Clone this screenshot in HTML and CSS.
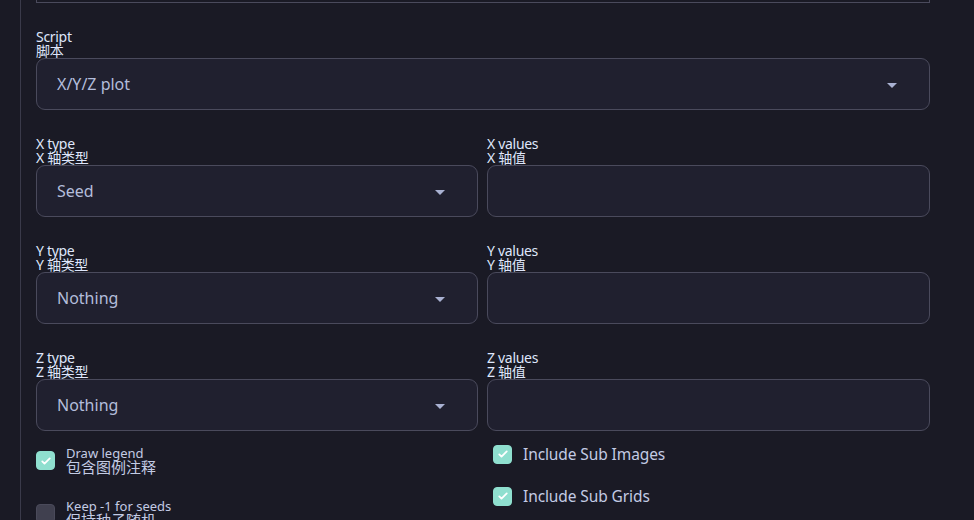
FILE: index.html
```html
<!DOCTYPE html>
<html lang="en">
<head>
    <meta charset="UTF-8">
    <title>X/Y/Z plot</title>
    <link rel="stylesheet" href="styles.css">
</head>
<body>
    <div class="panel">
        <div class="prev-box"></div>

        <div class="field">
            <label class="field-label">Script<br>脚本</label>
            <div class="select">
                <span>X/Y/Z plot</span>
                <span class="arrow"></span>
            </div>
        </div>

        <div class="row">
            <div class="field">
                <label class="field-label">X type<br>X 轴类型</label>
                <div class="select"><span>Seed</span><span class="arrow"></span></div>
            </div>
            <div class="field">
                <label class="field-label">X values<br>X 轴值</label>
                <div class="textbox"></div>
            </div>
        </div>

        <div class="row">
            <div class="field">
                <label class="field-label">Y type<br>Y 轴类型</label>
                <div class="select"><span>Nothing</span><span class="arrow"></span></div>
            </div>
            <div class="field">
                <label class="field-label">Y values<br>Y 轴值</label>
                <div class="textbox"></div>
            </div>
        </div>

        <div class="row">
            <div class="field">
                <label class="field-label">Z type<br>Z 轴类型</label>
                <div class="select"><span>Nothing</span><span class="arrow"></span></div>
            </div>
            <div class="field">
                <label class="field-label">Z values<br>Z 轴值</label>
                <div class="textbox"></div>
            </div>
        </div>

        <div class="options">
            <div class="col col-left">
                <div class="check">
                    <span class="box checked">
                        <svg viewBox="0 0 16 16" width="12" height="12"><path d="M3 8.5l3 3 7-7" fill="none" stroke="#fff" stroke-width="2.4" stroke-linecap="round" stroke-linejoin="round"/></svg>
                    </span>
                    <span class="check-label">Draw legend<br><span class="zh">包含图例注释</span></span>
                </div>
                <div class="check">
                    <span class="box"></span>
                    <span class="check-label">Keep -1 for seeds<br><span class="zh">保持种子随机</span></span>
                </div>
            </div>
            <div class="col col-right">
                <div class="check single">
                    <span class="box checked">
                        <svg viewBox="0 0 16 16" width="12" height="12"><path d="M3 8.5l3 3 7-7" fill="none" stroke="#fff" stroke-width="2.4" stroke-linecap="round" stroke-linejoin="round"/></svg>
                    </span>
                    <span class="check-text">Include Sub Images</span>
                </div>
                <div class="check single">
                    <span class="box checked">
                        <svg viewBox="0 0 16 16" width="12" height="12"><path d="M3 8.5l3 3 7-7" fill="none" stroke="#fff" stroke-width="2.4" stroke-linecap="round" stroke-linejoin="round"/></svg>
                    </span>
                    <span class="check-text">Include Sub Grids</span>
                </div>
            </div>
        </div>
    </div>
</body>
</html>
```

FILE: styles.css
```css
html, body {
    margin: 0;
    height: 100%;
    overflow: hidden;
}

body {
    background-color: #1a1a25;
    font-family: "Noto Sans", "Noto Sans CJK SC", sans-serif;
    color: #dfe6fb;
}

.panel {
    margin-left: 20px;
    border-left: 1px solid #3a3a4a;
    padding-left: 15px;
    width: 894px;
    min-height: 100%;
}

.prev-box {
    height: 40px;
    margin-top: -37px;
    margin-bottom: 27px;
    border: 1px solid #4a4a5c;
    box-sizing: border-box;
}

.field {
    margin-bottom: 27px;
    min-width: 0;
}

.field-label {
    display: block;
    height: 28px;
    font-size: 14px;
    line-height: 14px;
    letter-spacing: -0.3px;
    color: #dfe6fb;
}

.select,
.textbox {
    height: 52px;
    box-sizing: border-box;
    border: 1px solid #4a4a5c;
    border-radius: 9px;
    background-color: #20202f;
}

.select {
    display: flex;
    align-items: center;
    justify-content: space-between;
    padding: 0 32px 0 20px;
    font-size: 16px;
    color: #b3bddb;
}

.arrow {
    width: 0;
    height: 0;
    border-left: 5px solid transparent;
    border-right: 5px solid transparent;
    border-top: 5px solid #a9b1d2;
    margin-top: 2px;
}

.row,
.options {
    display: grid;
    grid-template-columns: 442px 1fr;
    gap: 9px;
}

.options {
    margin-top: -12px;
}

.col {
    display: flex;
    flex-direction: column;
}

.col-left {
    gap: 24px;
}

.col-right {
    gap: 22px;
    padding-left: 6px;
    margin-top: -2px;
}

.check {
    display: flex;
    align-items: center;
    gap: 11px;
}

.box {
    width: 19px;
    height: 19px;
    box-sizing: border-box;
    border-radius: 4px;
    background-color: #40404f;
    border: 1px solid #4a4a5a;
    display: flex;
    align-items: center;
    justify-content: center;
    flex-shrink: 0;
}

.box.checked {
    background-color: #8fdfcf;
    border-color: #8fdfcf;
}

.check-label {
    font-size: 13px;
    line-height: 14px;
    color: #c3cbe4;
}

.check-label .zh {
    font-size: 15px;
}

.check-text {
    font-size: 15.5px;
    line-height: 20px;
    letter-spacing: -0.1px;
    color: #c3cbe4;
}
```
